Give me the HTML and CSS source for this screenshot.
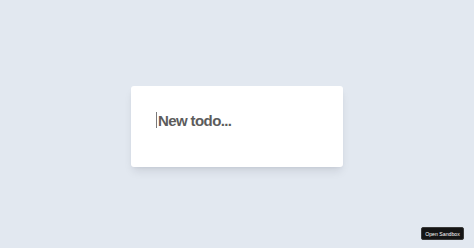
FILE: index.html
```html
<!DOCTYPE html>
<html>
<head>
<meta charset="utf-8">
<link rel="stylesheet" href="styles.css">
</head>
<body>
<main class="page">
  <div class="card">
    <div class="input">
      <span class="caret"></span>
      <span class="placeholder">New todo...</span>
    </div>
  </div>
</main>
<a class="sandbox-btn">Open Sandbox</a>
</body>
</html>
```
FILE: styles.css
```css
html, body {
  margin: 0;
  padding: 0;
  height: 100%;
}
body {
  background: #e2e8f0;
  font-family: "Liberation Sans", Arial, sans-serif;
}
.page {
  box-sizing: border-box;
  height: 100%;
  padding-top: 5px;
  display: flex;
  align-items: center;
  justify-content: center;
}
.card {
  box-sizing: border-box;
  width: 212px;
  height: 81px;
  background: #ffffff;
  border-radius: 3px;
  box-shadow: 0 6px 10px -2px rgba(15, 23, 42, 0.10), 0 2px 4px -2px rgba(15, 23, 42, 0.08);
  padding: 26px 25px 0 25px;
}
.input {
  display: flex;
  align-items: flex-start;
  height: 18px;
}
.caret {
  width: 1px;
  height: 16px;
  margin-top: 0;
  background: #7a7a7a;
}
.placeholder {
  margin-left: 1px;
  font-size: 15px;
  line-height: 18px;
  font-weight: 700;
  letter-spacing: -0.6px;
  color: #5c5c5c;
}
.sandbox-btn {
  position: fixed;
  right: 10px;
  bottom: 8px;
  box-sizing: border-box;
  width: 43px;
  height: 13px;
  display: flex;
  align-items: center;
  justify-content: center;
  background: #151515;
  border: 1px solid #3a3a3a;
  border-radius: 2px;
  color: #ffffff;
  font-size: 5.2px;
  font-family: "Liberation Sans", Arial, sans-serif;
  white-space: nowrap;
}
```
